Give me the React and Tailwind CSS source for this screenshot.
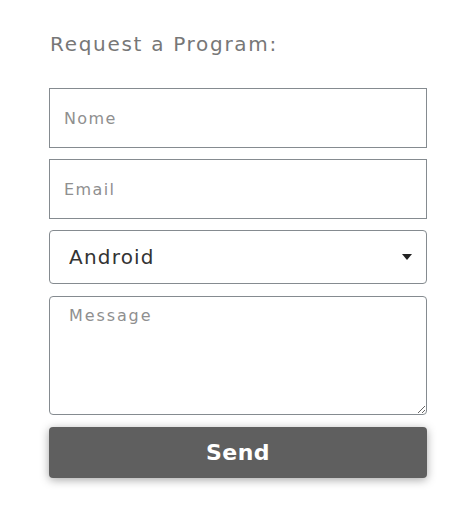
import React, { useState } from 'react';

const fieldBase =
    "block w-full border border-[#858b90] bg-white text-[#333] outline-none placeholder:text-[#8f8f8f]";

const App = () => {
    const [platform, setPlatform] = useState('Android');

    return (
        <div className="min-h-[510px] bg-white font-['DejaVu_Sans',sans-serif]">
            <form className="ml-[49px] w-[378px] pt-[30px]" onSubmit={(e) => e.preventDefault()}>
                <h2 className="mb-[30px] pl-[1px] text-[20px] leading-[28px] tracking-[1.7px] text-[#777]">
                    Request a Program:
                </h2>

                <input
                    type="text"
                    placeholder="Nome"
                    className={`${fieldBase} h-[60px] px-[14px] text-[16px] tracking-[1.4px]`}
                />
                <input
                    type="email"
                    placeholder="Email"
                    className={`${fieldBase} mt-[11px] h-[60px] px-[14px] text-[16px] tracking-[1.4px]`}
                />

                {/* select with own caret */}
                <div className="relative mt-[11px]">
                    <select
                        value={platform}
                        onChange={(e) => setPlatform(e.target.value)}
                        className={`${fieldBase} h-[54px] appearance-none rounded-[4px] pl-[19px] text-[20px] tracking-[1.2px] text-[#222]`}
                    >
                        <option>Android</option>
                        <option>iOS</option>
                        <option>Windows</option>
                    </select>
                    <svg
                        className="pointer-events-none absolute right-[15px] top-[24px]"
                        width="10"
                        height="6"
                        viewBox="0 0 10 6"
                    >
                        <path d="M0 0 L10 0 L5 6 Z" fill="#222" />
                    </svg>
                </div>

                <textarea
                    placeholder="Message"
                    className={`${fieldBase} mt-[12px] h-[119px] rounded-[4px] px-[19px] pt-[7px] text-[16px] tracking-[1.9px]`}
                />

                <button
                    type="submit"
                    className="mt-[12px] h-[51px] w-full rounded-[4px] bg-[#5f5f5f] text-[22px] font-bold tracking-[0.5px] text-white shadow-[0_2px_10px_rgba(0,0,0,0.35)]"
                >
                    Send
                </button>
            </form>
        </div>
    );
};

export default App;
